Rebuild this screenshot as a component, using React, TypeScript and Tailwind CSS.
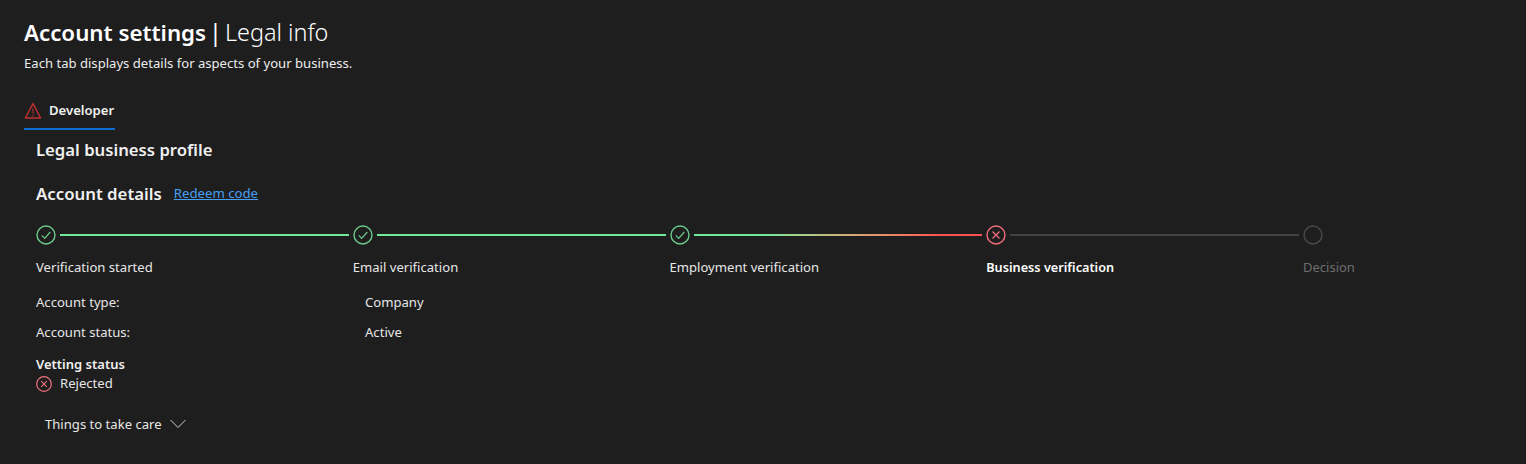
const FONT = 'font-["Noto_Sans","Open_Sans",sans-serif]'

const GREEN = '#6ccb8c'
const RED = '#f1707b'

function StepIcon({ status }: { status: 'done' | 'failed' | 'todo' }) {
  const stroke = status === 'done' ? GREEN : status === 'failed' ? RED : '#4a4a4a'
  return (
    <svg width="20" height="20" viewBox="0 0 20 20" fill="none" className="shrink-0">
      <circle cx="10" cy="10" r="9" stroke={stroke} strokeWidth="1.4" />
      {status === 'done' && <path d="M5.8 10.4l2.9 2.9 5.6-6.3" stroke={stroke} strokeWidth="1.2" />}
      {status === 'failed' && <path d="M6.5 6.5l7 7M13.5 6.5l-7 7" stroke={stroke} strokeWidth="1.2" />}
    </svg>
  )
}

const steps = [
  { label: 'Verification started', status: 'done', line: 'bg-[#6fe89a]' },
  { label: 'Email verification', status: 'done', line: 'bg-[#6fe89a]' },
  {
    label: 'Employment verification',
    status: 'done',
    line: 'bg-gradient-to-r from-[#6fe89a] from-25% to-[#ff5050] to-85%',
  },
  { label: 'Business verification', status: 'failed', line: 'bg-[#424242]' },
  { label: 'Decision', status: 'todo', line: '' },
] as const

function Stepper() {
  return (
    <div className="flex">
      {steps.map((step) => (
        <div key={step.label} className="w-[316.75px] shrink-0">
          <div className="flex h-5 items-center">
            <StepIcon status={step.status} />
            {step.line && <div className={`ml-[4px] mr-[4px] h-[2px] flex-1 ${step.line}`} />}
          </div>
          <div
            className={`mt-[12px] leading-[20px] ${
              step.status === 'failed'
                ? 'text-[12.7px] font-semibold text-white'
                : step.status === 'todo'
                  ? 'text-[13px] text-[#6e6e6e]'
                  : 'text-[13.1px] text-[#e6e6e6]'
            }`}
          >
            {step.label}
          </div>
        </div>
      ))}
    </div>
  )
}

export default function App() {
  return (
    <div className={`h-[464px] overflow-hidden bg-[#1e1e1e] pl-6 pt-[17px] text-[#f0f0f0] ${FONT}`}>
      <h1 className="flex items-baseline leading-[30px] text-white">
        <span className="text-[22.3px] font-semibold">Account settings</span>
        <span className="ml-[3px] text-[23.4px] font-normal">|</span>
        <span className="ml-[3px] text-[23.4px] font-light">Legal info</span>
      </h1>
      <p className="mt-[6px] text-[13.1px] leading-[18px] text-[#ececec]">
        Each tab displays details for aspects of your business.
      </p>

      <div className="mt-[24px] flex h-[34px] w-[91px] items-center border-b-2 border-[#0a6fd0] pb-[3px]">
        <svg width="18" height="18" viewBox="0 0 18 18" fill="none" className="shrink-0">
          <path d="M9 1.6L16.6 16H1.4L9 1.6Z" stroke="#c23030" strokeWidth="1.4" strokeLinejoin="round" />
          <path d="M9 6.5v5.3" stroke="#8f2a2a" strokeWidth="1.5" />
          <circle cx="9" cy="13.6" r="0.9" fill="#8f2a2a" />
        </svg>
        <span className="ml-[7px] text-[13.1px] font-semibold text-[#f0f0f0]">Developer</span>
      </div>

      <div className="pl-3">
        <h2 className="mt-[9px] text-[16.7px] font-semibold leading-[22px]">Legal business profile</h2>

        <div className="mt-[22px] flex items-center">
          <h3 className="text-[16.8px] font-semibold leading-[22px]">Account details</h3>
          <a href="#" className="mb-[2px] ml-3 text-[13.2px] leading-[18px] text-[#479ef5] underline">
            Redeem code
          </a>
        </div>

        <div className="mt-[20px]">
          <Stepper />
        </div>

        <div className="mt-[15px] text-[13.1px] leading-[20px] text-[#e6e6e6]">
          <div className="flex">
            <div className="w-[329px]">Account type:</div>
            <div>Company</div>
          </div>
          <div className="mt-[10px] flex">
            <div className="w-[329px]">Account status:</div>
            <div>Active</div>
          </div>
        </div>

        <div className="mt-[13px] text-[13px] font-semibold leading-[18px]">Vetting status</div>
        <div className="mt-[1px] flex h-[20px] items-center text-[13.1px] text-[#e6e6e6]">
          <svg width="16" height="16" viewBox="0 0 16 16" fill="none" className="shrink-0">
            <circle cx="8" cy="8" r="7.3" stroke={RED} strokeWidth="1.2" />
            <path d="M5.2 5.2l5.6 5.6M10.8 5.2l-5.6 5.6" stroke={RED} strokeWidth="1.1" />
          </svg>
          <span className="ml-2">Rejected</span>
        </div>

        <div className="mt-[20px] flex items-center pl-[9px] text-[13.1px] leading-[20px] text-[#e6e6e6]">
          <span>Things to take care</span>
          <svg width="16" height="10" viewBox="0 0 16 10" fill="none" className="ml-2">
            <path d="M0.5 1l7.5 7.5L15.5 1" stroke="#cfcfcf" strokeWidth="1" />
          </svg>
        </div>
      </div>
    </div>
  )
}
